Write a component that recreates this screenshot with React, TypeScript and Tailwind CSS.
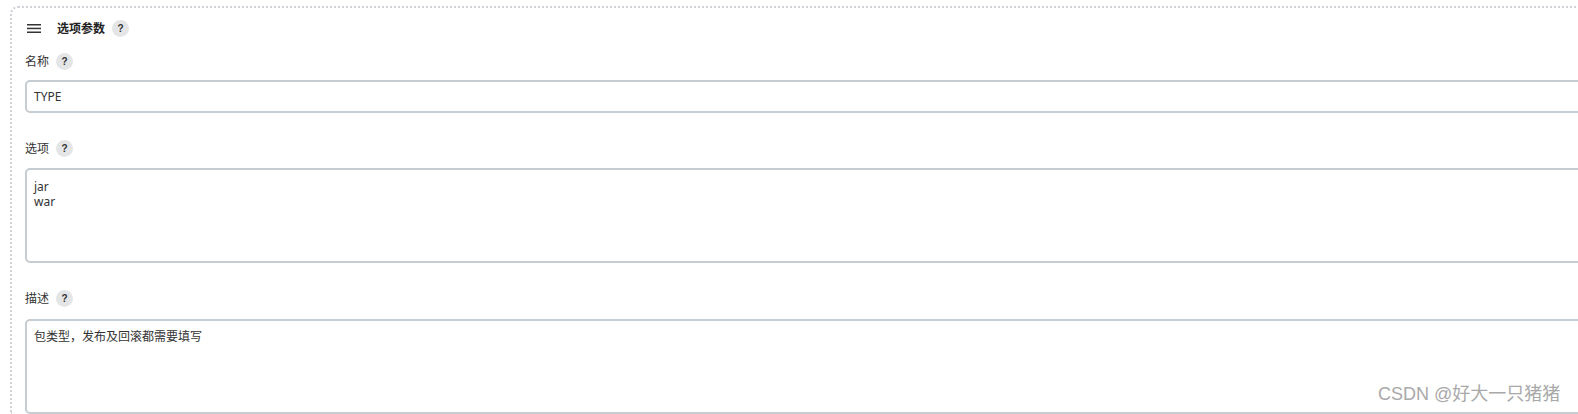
const font = "font-['Noto_Sans_CJK_SC','Noto_Sans',sans-serif]";

function Help() {
  return (
    <span className="ml-[7px] inline-flex h-[17px] w-[17px] items-center justify-center rounded-full bg-[#e4e5e7] text-[10px] font-bold text-[#333] font-['Liberation_Sans',sans-serif]">
      ?
    </span>
  );
}

function Label({ text }: { text: string }) {
  return (
    <div className="flex h-[20px] items-center text-[12px] text-[#333]">
      <span>{text}</span>
      <Help />
    </div>
  );
}

const boxClass =
  "w-full rounded-[5px] border-2 border-[#c5ccd2] bg-white px-[7px] text-[12px] text-[#333] font-['Noto_Sans','Noto_Sans_CJK_SC',sans-serif]";

export default function App() {
  return (
    <div className={`relative h-[414px] w-[1578px] overflow-hidden bg-white ${font}`}>
      <div className="ml-[10px] mt-[6px] w-[1620px] rounded-tl-[8px] border-l-2 border-t-2 border-dotted border-[#cfd3d7] pl-[13px] pt-[10px]">
        <div className="flex h-[20px] items-center">
          <svg width="14" height="9" viewBox="0 0 14 9" className="ml-[2px]">
            <rect x="0" y="0" width="14" height="1.5" fill="#333" />
            <rect x="0" y="3.7" width="14" height="1.5" fill="#333" />
            <rect x="0" y="7.5" width="14" height="1.5" fill="#333" />
          </svg>
          <span className="ml-[16px] text-[12px] font-bold text-[#222]">选项参数</span>
          <Help />
        </div>

        <div className="mt-[13px]">
          <Label text="名称" />
        </div>
        <div className={`mt-[9px] flex h-[33px] items-center ${boxClass}`}>TYPE</div>

        <div className="mt-[25px]">
          <Label text="选项" />
        </div>
        <div className={`mt-[10px] h-[95px] pt-[9px] leading-[15px] ${boxClass}`}>
          <div>jar</div>
          <div>war</div>
        </div>

        <div className="mt-[25px]">
          <Label text="描述" />
        </div>
        <div className={`mt-[11px] h-[95px] pt-[7px] leading-[15px] ${boxClass}`}>
          <div className="font-['Noto_Sans_CJK_SC',sans-serif]">包类型，发布及回滚都需要填写</div>
        </div>
      </div>

      <div className="absolute left-[1378px] top-[381px] text-[18px] text-[#a9a9a9] font-['Liberation_Sans','Noto_Sans_CJK_SC',sans-serif]">
        CSDN @好大一只猪猪
      </div>
    </div>
  );
}
